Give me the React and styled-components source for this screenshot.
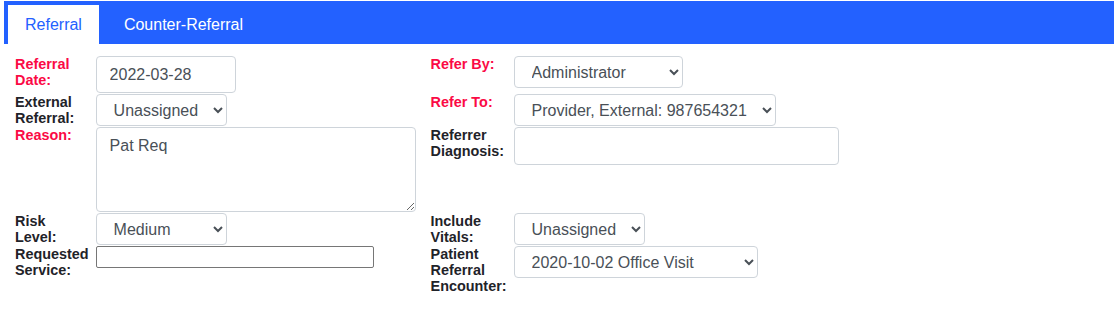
import React from 'react'
import styled, { createGlobalStyle } from 'styled-components'

const GlobalStyle = createGlobalStyle`
  body {
    margin: 0;
    background: #fff;
    font-family: "Liberation Sans", Arial, sans-serif;
  }
`

const Page = styled.div`
  padding: 1px 2px 0 4px;
`

const TabBar = styled.div`
  display: flex;
  gap: 8px;
  height: 43px;
  padding: 4px 4px 0 4px;
  box-sizing: border-box;
  background: #2361ff;
`

const Tab = styled.div`
  display: flex;
  align-items: center;
  padding: 0 17px;
  font-size: 16px;
  color: ${p => (p.$active ? '#2361ff' : '#fff')};
  background: ${p => (p.$active ? '#fff' : 'transparent')};
`

const Form = styled.div`
  display: grid;
  grid-template-columns: min-content 335px min-content auto;
  row-gap: 1px;
  align-items: start;
  padding: 12px 0 0 11px;
`

const Label = styled.div`
  padding-right: 7px;
  font-size: 14.4px;
  line-height: 16px;
  font-weight: bold;
  color: ${p => (p.$required ? '#fb0a45' : '#1f2329')};
`

const Field = styled.div`
  display: flex;
`

const TextInput = styled.input`
  box-sizing: border-box;
  width: ${p => p.$w}px;
  height: ${p => p.$h || 37}px;
  padding: 0 13px;
  border: 1px solid #ced4da;
  border-radius: 4px;
  font-family: "Liberation Sans", Arial, sans-serif;
  font-size: 16px;
  color: #495057;
  outline: none;
`

const PlainInput = styled.input`
  box-sizing: border-box;
  width: ${p => p.$w}px;
  height: 22px;
  border: 1px solid #767676;
  border-radius: 2px;
  padding: 1px 2px;
  font-family: "Liberation Sans", Arial, sans-serif;
  font-size: 13px;
`

const TextArea = styled.textarea`
  box-sizing: border-box;
  width: 320px;
  height: 85px;
  padding: 6px 13px;
  border: 1px solid #ced4da;
  border-radius: 4px;
  font-family: "Liberation Sans", Arial, sans-serif;
  font-size: 16px;
  line-height: 24px;
  color: #495057;
  outline: none;
`

const Select = styled.select`
  box-sizing: border-box;
  width: ${p => p.$w}px;
  height: 32px;
  padding: 0 6px 0 13px;
  border: 1px solid #ced4da;
  border-radius: 4px;
  background: #fff;
  font-family: "Liberation Sans", Arial, sans-serif;
  font-size: 16px;
  color: #495057;
  outline: none;
`

const Choice = ({ value, width }) => (
  <Select $w={width} defaultValue={value}>
    <option value={value}>{value}</option>
  </Select>
)

export default function App() {
  return (
    <Page>
      <GlobalStyle />
      <TabBar>
        <Tab $active>Referral</Tab>
        <Tab>Counter-Referral</Tab>
      </TabBar>
      <Form>
        <Label $required>Referral Date:</Label>
        <Field>
          <TextInput $w={140} defaultValue="2022-03-28" />
        </Field>
        <Label $required>Refer By:</Label>
        <Field>
          <Choice value="Administrator" width={169} />
        </Field>

        <Label>External Referral:</Label>
        <Field>
          <Choice value="Unassigned" width={131} />
        </Field>
        <Label $required>Refer To:</Label>
        <Field>
          <Choice value="Provider, External: 987654321" width={262} />
        </Field>

        <Label $required>Reason:</Label>
        <Field>
          <TextArea defaultValue="Pat Req" />
        </Field>
        <Label>Referrer Diagnosis:</Label>
        <Field>
          <TextInput $w={325} $h={38} defaultValue="" />
        </Field>

        <Label>Risk Level:</Label>
        <Field>
          <Choice value="Medium" width={131} />
        </Field>
        <Label>Include Vitals:</Label>
        <Field>
          <Choice value="Unassigned" width={131} />
        </Field>

        <Label>Requested Service:</Label>
        <Field>
          <PlainInput $w={278} defaultValue="" />
        </Field>
        <Label>Patient Referral Encounter:</Label>
        <Field>
          <Choice value="2020-10-02 Office Visit" width={244} />
        </Field>
      </Form>
    </Page>
  )
}
